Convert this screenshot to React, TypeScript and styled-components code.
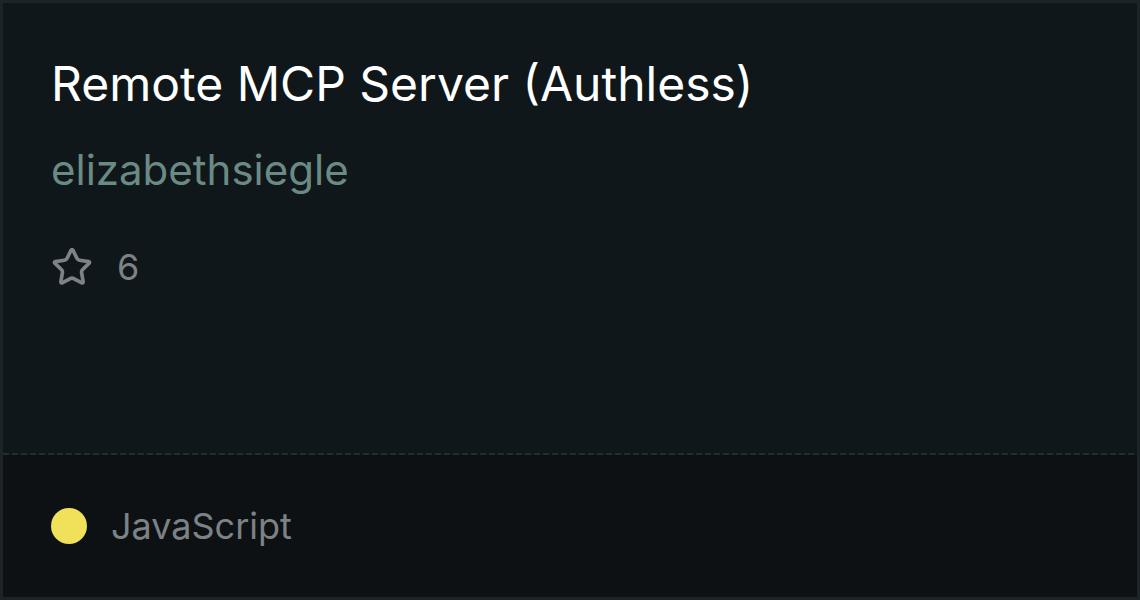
import React from 'react';
import styled, { createGlobalStyle } from 'styled-components';

const GlobalStyle = createGlobalStyle`
  html, body {
    margin: 0;
    padding: 0;
    background: #0d1114;
  }
  body {
    font-family: Inter, 'Noto Sans', sans-serif;
  }
`

const Card = styled.div`
  box-sizing: border-box;
  width: 1140px;
  height: 600px;
  border: 3px solid #1d2427;
  background: #10171a;
  display: flex;
  flex-direction: column;
  overflow: hidden;
`

const Body = styled.div`
  flex: 1;
  display: flex;
  flex-direction: column;
  padding: 52px 48px 0 48px;
`

const Title = styled.h1`
  margin: 0;
  font-size: 48px;
  font-weight: 400;
  line-height: 58px;
  color: #ffffff;
`

const Owner = styled.div`
  margin-top: 31px;
  font-size: 42px;
  line-height: 51px;
  color: #6a8a83;
`

const Stats = styled.div`
  margin-top: 50px;
  display: flex;
  align-items: center;
  gap: 24px;
  color: #7c8285;
  font-size: 36px;
  line-height: 44px;
`

const Divider = styled.div`
  height: 2px;
  background: repeating-linear-gradient(90deg, #262d30 0 6px, transparent 6px 9px);
`

const Footer = styled.div`
  height: 142px;
  background: #0d1114;
  display: flex;
  align-items: center;
  padding: 0 48px;
  gap: 24px;
`

const LangDot = styled.span<{ $color: string }>`
  width: 36px;
  height: 36px;
  border-radius: 50%;
  background: ${p => p.$color};
  flex-shrink: 0;
`

const LangName = styled.span`
  font-size: 36px;
  line-height: 44px;
  color: #7c8285;
`

const StarIcon = () => (
  <svg width="42" height="42" viewBox="0 0 24 24" fill="none" stroke="#7c8285" strokeWidth="2.1" strokeLinejoin="round" strokeLinecap="round">
    <path d="M11.525 2.295a.53.53 0 0 1 .95 0l2.31 4.679a2.123 2.123 0 0 0 1.595 1.16l5.166.756a.53.53 0 0 1 .294.904l-3.736 3.638a2.123 2.123 0 0 0-.611 1.878l.882 5.14a.53.53 0 0 1-.771.56l-4.618-2.428a2.122 2.122 0 0 0-1.973 0L6.396 21.01a.53.53 0 0 1-.77-.56l.881-5.139a2.122 2.122 0 0 0-.611-1.879L2.16 9.795a.53.53 0 0 1 .294-.906l5.165-.755a2.122 2.122 0 0 0 1.597-1.16z" />
  </svg>
)

function App() {
  return (
    <>
      <GlobalStyle />
      <Card>
        <Body>
          <Title>Remote MCP Server (Authless)</Title>
          <Owner>elizabethsiegle</Owner>
          <Stats>
            <StarIcon />
            <span>6</span>
          </Stats>
        </Body>
        <Divider />
        <Footer>
          <LangDot $color="#f1e05a" />
          <LangName>JavaScript</LangName>
        </Footer>
      </Card>
    </>
  );
}

export default App;
